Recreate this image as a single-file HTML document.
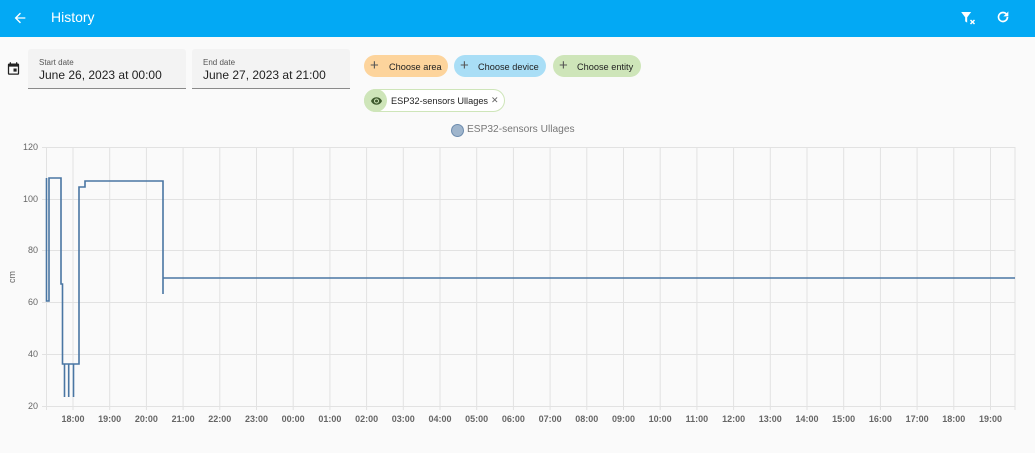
<!DOCTYPE html>
<html><head><style>
body{margin:0;width:1035px;height:453px;background:#fafafa;font-family:"Liberation Sans",sans-serif;overflow:hidden;position:relative}
.hdr{position:absolute;left:0;top:0;width:1035px;height:37px;background:#03a9f4;color:#fff}
.hdr .t{position:absolute;left:51px;top:9px;font-size:14px}
.fld{position:absolute;top:49px;height:39px;background:#f3f3f3;border-bottom:1px solid #8a8a8a;border-radius:3px 3px 0 0}
.fld .l{position:absolute;left:11px;top:9px;font-size:8px;color:#555}
.fld .v{position:absolute;left:11px;top:19px;font-size:12px;color:#222}
.chip{position:absolute;top:55px;height:22px;border-radius:11px;font-size:9.2px;color:#222;line-height:22px}
.chip span{top:1px}
.chip span.p{position:absolute;left:6px;top:0;font-size:15px;color:#555}
</style></head><body>
<div class="hdr">
<svg style="position:absolute;left:12px;top:10px" width="16" height="16" viewBox="0 0 24 24"><path d="M20 11H7.83l5.59-5.59L12 4l-8 8 8 8 1.41-1.41L7.83 13H20z" fill="#fff"/></svg>
<div class="t">History</div>
<svg style="position:absolute;left:960px;top:10px" width="17" height="16" viewBox="0 0 24 24"><path d="M1 3h15l-6 8v8l-3-2v-6z" fill="#fff"/><path d="M15 15l6 6M21 15l-6 6" stroke="#fff" stroke-width="2.2"/></svg>
<svg style="position:absolute;left:995px;top:9px" width="16" height="16" viewBox="0 0 24 24"><path d="M17.65 6.35A7.96 7.96 0 0012 4a8 8 0 108 8h-2.6A5.5 5.5 0 1112 6.5c1.5 0 2.8.6 3.8 1.6L12.5 11H20V3.5z" fill="#fff"/></svg>
</div>
<svg style="position:absolute;left:6px;top:61px" width="15" height="15" viewBox="0 0 24 24"><path d="M19 4h-1V2h-2v2H8V2H6v2H5a2 2 0 00-2 2v14a2 2 0 002 2h14a2 2 0 002-2V6a2 2 0 00-2-2zm0 16H5V9h14zM12 12h5v5h-5z" fill="#222"/></svg>
<div class="fld" style="left:28px;width:158px"><div class="l">Start date</div><div class="v">June 26, 2023 at 00:00</div></div>
<div class="fld" style="left:192px;width:158px"><div class="l">End date</div><div class="v">June 27, 2023 at 21:00</div></div>
<div class="chip" style="left:364px;width:84px;background:#fdd49c"><span class="p">+</span><span style="position:absolute;left:25px">Choose area</span></div>
<div class="chip" style="left:454px;width:92px;background:#a9def6"><span class="p">+</span><span style="position:absolute;left:24px">Choose device</span></div>
<div class="chip" style="left:553px;width:88px;background:#cee5b9"><span class="p">+</span><span style="position:absolute;left:24px">Choose entity</span></div>
<div style="position:absolute;left:364px;top:89px;width:139px;height:21px;border:1px solid #cee5b9;border-radius:12px;background:#fff;font-size:9.2px;line-height:21px;color:#222">
<div style="position:absolute;left:-1px;top:-1px;width:23px;height:23px;border-radius:12px;background:#cee5b9"></div>
<svg style="position:absolute;left:5px;top:5px" width="13" height="12" viewBox="0 0 24 24"><path d="M12 4.5C7 4.5 2.7 7.6 1 12c1.7 4.4 6 7.5 11 7.5s9.3-3.1 11-7.5c-1.7-4.4-6-7.5-11-7.5zM12 17a5 5 0 110-10 5 5 0 010 10zm0-8a3 3 0 100 6 3 3 0 000-6z" fill="#3d5a2c"/></svg>
<span style="position:absolute;left:26px;top:1px">ESP32-sensors Ullages</span><span style="position:absolute;left:126px;color:#666">✕</span></div>
<div style="position:absolute;left:451px;top:124px;width:11px;height:11px;border-radius:50%;background:#9fb5cc;border:1px solid #6d8cae"></div>
<div style="position:absolute;left:467px;top:124px;font-size:10.2px;color:#777">ESP32-sensors Ullages</div>
<svg style="position:absolute;left:0;top:0" width="1035" height="453">
<g stroke="#e2e2e2" stroke-width="1">
<line x1="42" y1="147.5" x2="1015" y2="147.5"/><line x1="42" y1="199.5" x2="1015" y2="199.5"/><line x1="42" y1="250.5" x2="1015" y2="250.5"/><line x1="42" y1="302.5" x2="1015" y2="302.5"/><line x1="42" y1="354.5" x2="1015" y2="354.5"/><line x1="42" y1="406.5" x2="1015" y2="406.5"/>
<line x1="46.5" y1="147" x2="46.5" y2="410"/>
<g id="v"></g>
</g>
<g font-size="9" fill="#666" text-anchor="end" font-family="Liberation Sans"><text x="38" y="150">120</text><text x="38" y="202">100</text><text x="38" y="253">80</text><text x="38" y="305">60</text><text x="38" y="357">40</text><text x="38" y="409">20</text></g>
<text x="15" y="277" font-size="9" fill="#666" transform="rotate(-90 15 277)" text-anchor="middle" font-family="Liberation Sans">cm</text>
<g id="xl" font-size="9" fill="#666" font-weight="bold" text-anchor="middle" font-family="Liberation Sans"></g>
<path d="M46.5 178V301H49V178H61V284H62.5V364H64.5V397V364H68.7V397V364H73.5V397V364H79V187H85V181H163V294V278H1015" fill="none" stroke="#4a76a3" stroke-width="1.6"/>
</svg>
<script>
var g=document.getElementById('v'),xl=document.getElementById('xl'),ns="http://www.w3.org/2000/svg";
for(var i=0;i<26;i++){var x=73+i*36.7;var l=document.createElementNS(ns,'line');l.setAttribute('x1',x);l.setAttribute('x2',x);l.setAttribute('y1',147);l.setAttribute('y2',410);g.appendChild(l);
var t=document.createElementNS(ns,'text');t.setAttribute('x',x);t.setAttribute('y',422);var h=(18+i)%24;t.textContent=(h<10?'0':'')+h+':00';xl.appendChild(t);}
var l=document.createElementNS(ns,'line');l.setAttribute('x1',1015);l.setAttribute('x2',1015);l.setAttribute('y1',147);l.setAttribute('y2',410);g.appendChild(l);
</script>
</body></html>
